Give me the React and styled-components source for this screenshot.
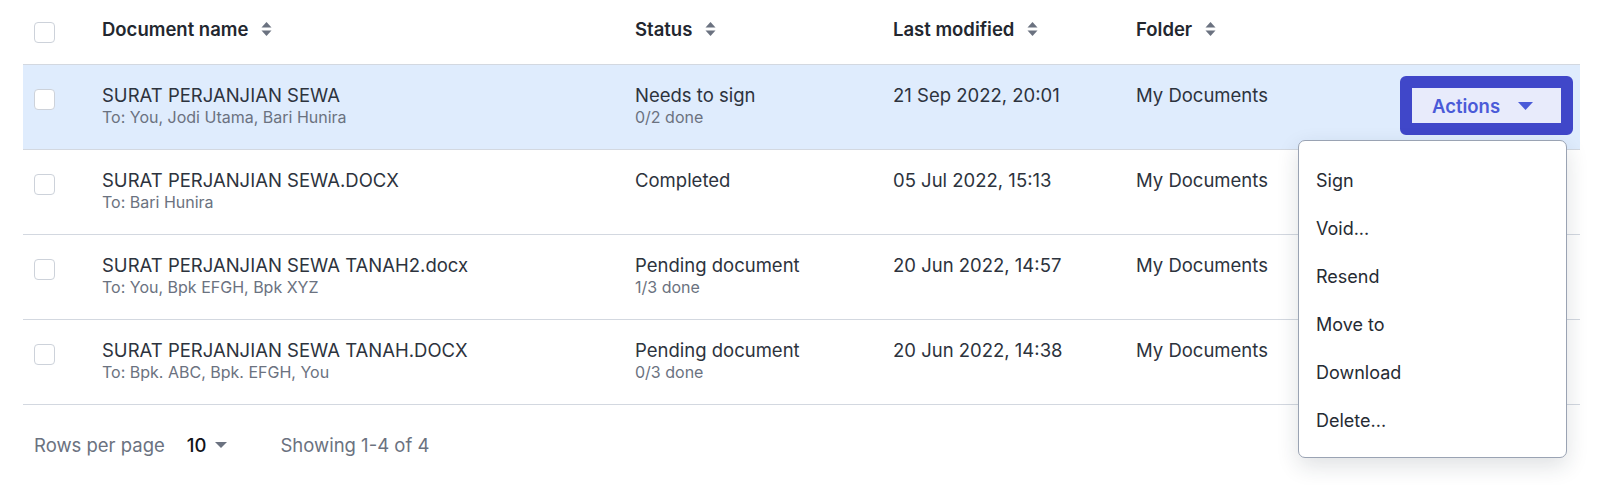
import styled, { createGlobalStyle } from "styled-components";

const GlobalStyle = createGlobalStyle`
  body {
    margin: 0;
    background: #ffffff;
    font-family: Inter, "Noto Sans", sans-serif;
    color: #2b313b;
  }
`;

const Page = styled.div`
  padding: 0 19px 0 23px;
`;

const Table = styled.div`
  display: flex;
  flex-direction: column;
`;

const Row = styled.div`
  display: grid;
  grid-template-columns: 79px 533px 258px 243px 1fr 190px;
  align-items: ${(p) => (p.$header ? "center" : "start")};
  height: ${(p) => (p.$header ? "64px" : "84px")};
  border-bottom: 1px solid #d3d8e0;
  background: ${(p) => (p.$active ? "#dfecfd" : "transparent")};
`;

const Cell = styled.div`
  position: relative;
  padding-top: 19px;
`;

const HeadCell = styled.div`
  position: relative;
  top: -3px;
`;

const CheckCell = styled.div`
  padding-left: 11px;
  padding-top: ${(p) => (p.$header ? "0" : "24px")};
`;

const Checkbox = styled.span`
  display: block;
  box-sizing: border-box;
  width: 21px;
  height: 21px;
  border: 1.5px solid #cdd2da;
  border-radius: 4px;
  background: #ffffff;
`;

const HeadLabel = styled.div`
  display: flex;
  align-items: center;
  gap: 13px;
  font-size: 18.5px;
  font-weight: 600;
  color: #23272f;
`;

const Title = styled.div`
  font-size: 18.5px;
  line-height: 23px;
  color: #2d333d;
`;

const Sub = styled.div`
  font-size: 16px;
  line-height: 20px;
  color: #6b7280;
`;

const ActionsCell = styled.div`
  position: relative;
  padding-top: 11px;
  display: flex;
  justify-content: flex-end;
  padding-right: 7px;
`;

const ActionsButton = styled.button`
  display: flex;
  align-items: center;
  gap: 18px;
  box-sizing: border-box;
  width: 173px;
  height: 59px;
  padding: 0 0 0 20px;
  border: 12px solid #4047c9;
  border-radius: 6px;
  background: #e8ebfb;
  color: #4a5ad8;
  font-family: Inter, "Noto Sans", sans-serif;
  font-size: 18.5px;
  font-weight: 600;
  cursor: pointer;
`;

const Menu = styled.div`
  position: absolute;
  top: 75px;
  right: 13px;
  box-sizing: border-box;
  width: 269px;
  padding: 15px 0 13px;
  background: #ffffff;
  border: 1px solid #9aa3b3;
  border-radius: 7px;
  box-shadow: 0 8px 22px rgba(30, 40, 60, 0.14);
  z-index: 10;
`;

const MenuItem = styled.div`
  height: 48px;
  display: flex;
  align-items: center;
  padding-left: 17px;
  font-size: 18px;
  color: #262b33;
`;

const Footer = styled.div`
  display: flex;
  align-items: center;
  height: 80px;
  padding-left: 11px;
  font-size: 18.5px;
  color: #6b7280;
`;

const RowsValue = styled.span`
  display: flex;
  align-items: center;
  gap: 9px;
  margin-left: 22px;
  margin-right: 53px;
  color: #111318;
  font-weight: 500;
`;

const SortIcon = () => (
  <svg width="11" height="16" viewBox="0 0 11 16" fill="#6b7280">
    <path d="M5.5 1 L10.5 6.5 H0.5 Z" />
    <path d="M5.5 15 L10.5 9.5 H0.5 Z" />
  </svg>
);

const Caret = ({ color, w = 15, h = 8 }) => (
  <svg width={w} height={h} viewBox="0 0 12 7" fill={color} preserveAspectRatio="none">
    <path d="M0 0 H12 L6 7 Z" />
  </svg>
);

const docs = [
  {
    name: "SURAT PERJANJIAN SEWA",
    to: "To: You, Jodi Utama, Bari Hunira",
    status: "Needs to sign",
    done: "0/2 done",
    date: "21 Sep 2022, 20:01",
    active: true,
  },
  {
    name: "SURAT PERJANJIAN SEWA.DOCX",
    to: "To: Bari Hunira",
    status: "Completed",
    date: "05 Jul 2022, 15:13",
  },
  {
    name: "SURAT PERJANJIAN SEWA TANAH2.docx",
    to: "To: You, Bpk EFGH, Bpk XYZ",
    status: "Pending document",
    done: "1/3 done",
    date: "20 Jun 2022, 14:57",
  },
  {
    name: "SURAT PERJANJIAN SEWA TANAH.DOCX",
    to: "To: Bpk. ABC, Bpk. EFGH, You",
    status: "Pending document",
    done: "0/3 done",
    date: "20 Jun 2022, 14:38",
  },
];

const menuItems = ["Sign", "Void...", "Resend", "Move to", "Download", "Delete..."];

export default function App() {
  return (
    <>
      <GlobalStyle />
      <Page>
        <Table>
          <Row $header>
            <CheckCell $header>
              <Checkbox />
            </CheckCell>
            {["Document name", "Status", "Last modified", "Folder"].map((h) => (
              <HeadCell key={h}>
                <HeadLabel>
                  {h}
                  <SortIcon />
                </HeadLabel>
              </HeadCell>
            ))}
            <HeadCell />
          </Row>
          {docs.map((d) => (
            <Row key={d.name} $active={d.active}>
              <CheckCell>
                <Checkbox />
              </CheckCell>
              <Cell>
                <Title>{d.name}</Title>
                <Sub>{d.to}</Sub>
              </Cell>
              <Cell>
                <Title>{d.status}</Title>
                {d.done && <Sub>{d.done}</Sub>}
              </Cell>
              <Cell>
                <Title>{d.date}</Title>
              </Cell>
              <Cell>
                <Title>My Documents</Title>
              </Cell>
              {d.active ? (
                <ActionsCell>
                  <ActionsButton>
                    Actions
                    <Caret color="#4a5ad8" />
                  </ActionsButton>
                  <Menu>
                    {menuItems.map((m) => (
                      <MenuItem key={m}>{m}</MenuItem>
                    ))}
                  </Menu>
                </ActionsCell>
              ) : (
                <Cell />
              )}
            </Row>
          ))}
        </Table>
        <Footer>
          Rows per page
          <RowsValue>
            10
            <Caret color="#6b7280" w={12} h={6} />
          </RowsValue>
          Showing 1-4 of 4
        </Footer>
      </Page>
    </>
  );
}
